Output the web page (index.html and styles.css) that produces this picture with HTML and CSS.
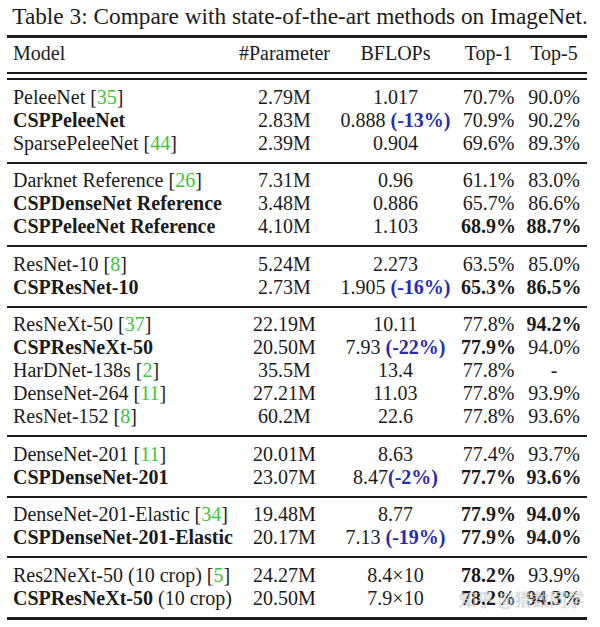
FILE: index.html
```html
<!DOCTYPE html>
<html lang="en">
<head>
<meta charset="utf-8">
<title>Table 3</title>
<link rel="stylesheet" href="styles.css">
</head>
<body>
<main class="page">
  <p class="title">Table 3: Compare with state-of-the-art methods on ImageNet.</p>
  <div class="table">
    <div class="row head">
      <span class="cell model">Model</span>
      <span class="cell">#Parameter</span>
      <span class="cell">BFLOPs</span>
      <span class="cell">Top-1</span>
      <span class="cell">Top-5</span>
    </div>

    <section class="group first">
      <div class="row"><span class="cell model">PeleeNet [<span class="cite">35</span>]</span><span class="cell">2.79M</span><span class="cell">1.017</span><span class="cell">70.7%</span><span class="cell">90.0%</span></div>
      <div class="row"><span class="cell model"><b>CSPPeleeNet</b></span><span class="cell">2.83M</span><span class="cell">0.888 <b class="gain">(-13%)</b></span><span class="cell">70.9%</span><span class="cell">90.2%</span></div>
      <div class="row"><span class="cell model">SparsePeleeNet [<span class="cite">44</span>]</span><span class="cell">2.39M</span><span class="cell">0.904</span><span class="cell">69.6%</span><span class="cell">89.3%</span></div>
    </section>

    <section class="group">
      <div class="row"><span class="cell model">Darknet Reference [<span class="cite">26</span>]</span><span class="cell">7.31M</span><span class="cell">0.96</span><span class="cell">61.1%</span><span class="cell">83.0%</span></div>
      <div class="row"><span class="cell model"><b>CSPDenseNet Reference</b></span><span class="cell">3.48M</span><span class="cell">0.886</span><span class="cell">65.7%</span><span class="cell">86.6%</span></div>
      <div class="row"><span class="cell model"><b>CSPPeleeNet Reference</b></span><span class="cell">4.10M</span><span class="cell">1.103</span><span class="cell"><b>68.9%</b></span><span class="cell"><b>88.7%</b></span></div>
    </section>

    <section class="group">
      <div class="row"><span class="cell model">ResNet-10 [<span class="cite">8</span>]</span><span class="cell">5.24M</span><span class="cell">2.273</span><span class="cell">63.5%</span><span class="cell">85.0%</span></div>
      <div class="row"><span class="cell model"><b>CSPResNet-10</b></span><span class="cell">2.73M</span><span class="cell">1.905 <b class="gain">(-16%)</b></span><span class="cell"><b>65.3%</b></span><span class="cell"><b>86.5%</b></span></div>
    </section>

    <section class="group">
      <div class="row"><span class="cell model">ResNeXt-50 [<span class="cite">37</span>]</span><span class="cell">22.19M</span><span class="cell">10.11</span><span class="cell">77.8%</span><span class="cell"><b>94.2%</b></span></div>
      <div class="row"><span class="cell model"><b>CSPResNeXt-50</b></span><span class="cell">20.50M</span><span class="cell">7.93 <b class="gain">(-22%)</b></span><span class="cell"><b>77.9%</b></span><span class="cell">94.0%</span></div>
      <div class="row"><span class="cell model">HarDNet-138s [<span class="cite">2</span>]</span><span class="cell">35.5M</span><span class="cell">13.4</span><span class="cell">77.8%</span><span class="cell">-</span></div>
      <div class="row"><span class="cell model">DenseNet-264 [<span class="cite">11</span>]</span><span class="cell">27.21M</span><span class="cell">11.03</span><span class="cell">77.8%</span><span class="cell">93.9%</span></div>
      <div class="row"><span class="cell model">ResNet-152 [<span class="cite">8</span>]</span><span class="cell">60.2M</span><span class="cell">22.6</span><span class="cell">77.8%</span><span class="cell">93.6%</span></div>
    </section>

    <section class="group">
      <div class="row"><span class="cell model">DenseNet-201 [<span class="cite">11</span>]</span><span class="cell">20.01M</span><span class="cell">8.63</span><span class="cell">77.4%</span><span class="cell">93.7%</span></div>
      <div class="row"><span class="cell model"><b>CSPDenseNet-201</b></span><span class="cell">23.07M</span><span class="cell">8.47<b class="gain">(-2%)</b></span><span class="cell"><b>77.7%</b></span><span class="cell"><b>93.6%</b></span></div>
    </section>

    <section class="group">
      <div class="row"><span class="cell model">DenseNet-201-Elastic [<span class="cite">34</span>]</span><span class="cell">19.48M</span><span class="cell">8.77</span><span class="cell"><b>77.9%</b></span><span class="cell"><b>94.0%</b></span></div>
      <div class="row"><span class="cell model"><b>CSPDenseNet-201-Elastic</b></span><span class="cell">20.17M</span><span class="cell">7.13 <b class="gain">(-19%)</b></span><span class="cell"><b>77.9%</b></span><span class="cell"><b>94.0%</b></span></div>
    </section>

    <section class="group last">
      <div class="row"><span class="cell model">Res2NeXt-50 (10 crop) [<span class="cite">5</span>]</span><span class="cell">24.27M</span><span class="cell">8.4×10</span><span class="cell"><b>78.2%</b></span><span class="cell">93.9%</span></div>
      <div class="row"><span class="cell model"><b>CSPResNeXt-50</b> (10 crop)</span><span class="cell">20.50M</span><span class="cell">7.9×10</span><span class="cell"><b>78.2%</b></span><span class="cell"><b>94.3%</b></span></div>
    </section>
  </div>
  <span class="watermark">知乎 @猎数同学</span>
</main>
</body>
</html>
```

FILE: styles.css
```css
html, body {
  margin: 0;
  padding: 0;
  background: #ffffff;
}

.page {
  position: relative;
  width: 600px;
  height: 627px;
  font-family: "Liberation Serif", "Times New Roman", serif;
  color: #1b1b1b;
}

.title {
  margin: 0 0 4px 0;
  padding-top: 1px;
  font-size: 23.3px;
  line-height: 30px;
  text-align: center;
  white-space: nowrap;
}

.table {
  margin-left: 7px;
  width: 580px;
  font-size: 20px;
  border-top: 3px solid #1b1b1b;
}

.row {
  display: grid;
  grid-template-columns: 227px 101px 121px 65px 66px;
  height: 23px;
  line-height: 23px;
}

.cell {
  text-align: center;
  white-space: nowrap;
}

.cell.model {
  text-align: left;
  padding-left: 6px;
}

.head {
  height: auto;
  padding: 3.5px 0 7.5px;
  border-bottom: 2px solid #1b1b1b;
}

.group {
  border-top: 2px solid #1b1b1b;
  padding: 5.5px 0 7px;
}

.group.first {
  margin-top: 4px;
}

.group.last {
  border-bottom: 3px solid #1b1b1b;
}

b {
  font-weight: bold;
}

.cite {
  color: #3cc43c;
}

.gain {
  color: #2a2ab4;
}

.watermark {
  position: absolute;
  left: 459px;
  top: 587px;
  font-family: "Noto Sans CJK SC", "Noto Sans", sans-serif;
  font-size: 17.5px;
  line-height: 24px;
  color: rgba(255, 255, 255, 0.6);
  text-shadow: 0 0 1px rgba(80, 80, 80, 0.55);
  white-space: nowrap;
}
```
